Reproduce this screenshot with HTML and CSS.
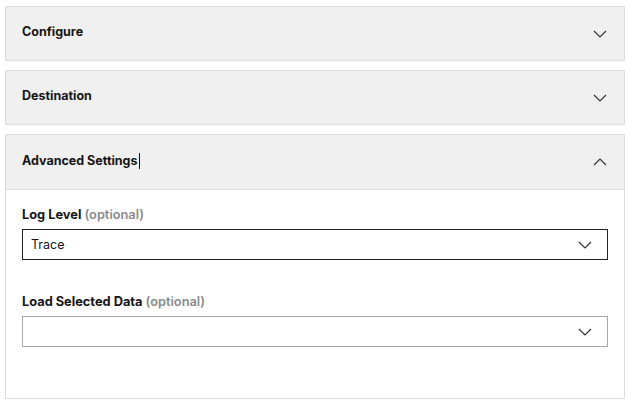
FILE: index.html
```html
<!DOCTYPE html>
<html>
<head>
<meta charset="utf-8">
<link rel="stylesheet" href="styles.css">
</head>
<body>
<div class="stack">
  <section class="panel">
    <div class="panel-head">
      <span class="title">Configure</span>
      <svg class="chev" width="14" height="8" viewBox="0 0 14 8"><path d="M1 1l6 6 6-6" fill="none" stroke="#333" stroke-width="1.2"/></svg>
    </div>
  </section>
  <section class="panel">
    <div class="panel-head">
      <span class="title">Destination</span>
      <svg class="chev" width="14" height="8" viewBox="0 0 14 8"><path d="M1 1l6 6 6-6" fill="none" stroke="#333" stroke-width="1.2"/></svg>
    </div>
  </section>
  <section class="panel open">
    <div class="panel-head">
      <span class="title">Advanced Settings<span class="caret"></span></span>
      <svg class="chev" width="14" height="8" viewBox="0 0 14 8"><path d="M1 7l6-6 6 6" fill="none" stroke="#333" stroke-width="1.2"/></svg>
    </div>
    <div class="panel-body">
      <div class="field">
        <label class="label">Log Level <span class="opt">(optional)</span></label>
        <div class="select dark">
          <span class="value">Trace</span>
          <svg class="chev" width="14" height="8" viewBox="0 0 14 8"><path d="M1 1l6 6 6-6" fill="none" stroke="#333" stroke-width="1.2"/></svg>
        </div>
      </div>
      <div class="field">
        <label class="label">Load Selected Data <span class="opt">(optional)</span></label>
        <div class="select">
          <span class="value"></span>
          <svg class="chev" width="14" height="8" viewBox="0 0 14 8"><path d="M1 1l6 6 6-6" fill="none" stroke="#333" stroke-width="1.2"/></svg>
        </div>
      </div>
    </div>
  </section>
</div>
</body>
</html>
```
FILE: styles.css
```css
html, body {
  margin: 0;
  padding: 0;
  background: #ffffff;
}
body {
  font-family: "Inter", "Liberation Sans", sans-serif;
  color: #151515;
}
.stack {
  display: flex;
  flex-direction: column;
  gap: 9px;
  width: 620px;
  margin: 6px 0 0 5px;
}
.panel {
  border: 1px solid #dcdcdc;
  background: #ffffff;
}
.panel-head {
  height: 53px;
  background: #f0f0f0;
  display: flex;
  align-items: center;
  justify-content: space-between;
  padding: 0 17px 0 16px;
  box-sizing: border-box;
}
.panel-head .title {
  font-weight: 700;
  font-size: 12.5px;
  line-height: 18px;
  margin-top: -3px;
  display: flex;
  align-items: center;
}
.panel.open .panel-head {
  border-bottom: 1px solid #dcdcdc;
  height: 55px;
}
.panel.open .panel-head .title {
  margin-top: -2px;
}
.caret {
  display: inline-block;
  width: 1px;
  height: 16px;
  background: #111;
  margin-left: 1px;
}
.chev {
  display: block;
}
.panel-body {
  padding: 16px 16px 51px 16px;
  display: flex;
  flex-direction: column;
  gap: 33px;
}
.field {
  display: flex;
  flex-direction: column;
  gap: 5px;
}
.label {
  font-size: 12.8px;
  font-weight: 700;
  line-height: 18px;
}
.opt {
  color: #8a8a8a;
  font-weight: 600;
}
.select {
  height: 31px;
  box-sizing: border-box;
  border: 1px solid #a8a8a8;
  display: flex;
  align-items: center;
  justify-content: space-between;
  padding: 0 15px 0 8px;
  font-size: 12.5px;
}
.select.dark {
  border-color: #222;
}
.value {
  color: #151515;
}
```
